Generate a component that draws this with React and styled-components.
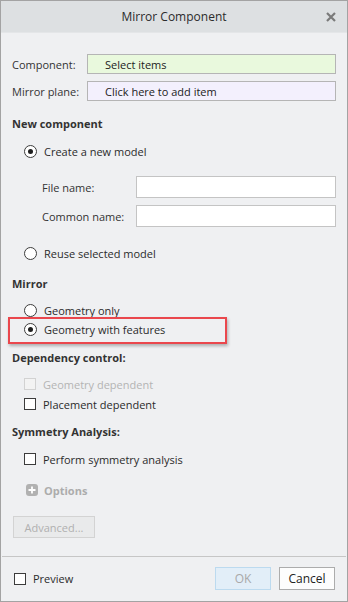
import React, { useState } from 'react'
import styled, { createGlobalStyle } from 'styled-components'

const Global = createGlobalStyle`
  html, body { margin: 0; padding: 0; background: #ffffff; }
  body { font-family: "Open Sans", "Noto Sans", sans-serif; }
`

const Dialog = () => {
  const [model, setmodel] = useState('new')
  const [mirror, setmirror] = useState('features')
  const [placement, setplacement] = useState(false)
  const [symmetry, setsymmetry] = useState(false)
  const [preview, setpreview] = useState(false)

  return (
    <Window>
      <Global />
      <TitleBar>
        <Title>Mirror Component</Title>
        <Close>
          <svg width="10" height="10" viewBox="0 0 10 10">
            <path d="M1 1 L9 9 M9 1 L1 9" stroke="#7a7a7a" strokeWidth="2.2" />
          </svg>
        </Close>
      </TitleBar>

      <Body>
        <FieldRow $top={21}>
          <Label $width={75}>Component:</Label>
          <Collector $bg="#e9f9dd">Select items</Collector>
        </FieldRow>
        <FieldRow $top={7}>
          <Label $width={75}>Mirror plane:</Label>
          <Collector $bg="#f3f0fd">Click here to add item</Collector>
        </FieldRow>

        <Section $top={14}>New component</Section>
        <Option $top={11} onClick={() => setmodel('new')}>
          <Radio $on={model === 'new'} />
          Create a new model
        </Option>
        <InputRow $top={16}>
          <Label $width={94}>File name:</Label>
          <TextBox />
        </InputRow>
        <InputRow $top={7}>
          <Label $width={94}>Common name:</Label>
          <TextBox />
        </InputRow>
        <Option $top={17} onClick={() => setmodel('reuse')}>
          <Radio $on={model === 'reuse'} />
          Reuse selected model
        </Option>

        <Section $top={13}>Mirror</Section>
        <Option $top={10} onClick={() => setmirror('geometry')}>
          <Radio $on={mirror === 'geometry'} />
          Geometry only
        </Option>
        <Option $top={1} $marked onClick={() => setmirror('features')}>
          <Radio $on={mirror === 'features'} />
          Geometry with features
        </Option>

        <Section $top={11}>Dependency control:</Section>
        <Option $top={10} $disabled>
          <Check $disabled />
          Geometry dependent
        </Option>
        <Option $top={2} onClick={() => setplacement(!placement)}>
          <Check $on={placement} />
          Placement dependent
        </Option>

        <Section $top={10}>Symmetry Analysis:</Section>
        <Option $top={11} onClick={() => setsymmetry(!symmetry)}>
          <Check $on={symmetry} />
          Perform symmetry analysis
        </Option>

        <Expander $top={13}>
          <PlusBox>
            <svg width="8" height="8" viewBox="0 0 8 8">
              <path d="M4 0.5 V7.5 M0.5 4 H7.5" stroke="#ffffff" strokeWidth="1.8" />
            </svg>
          </PlusBox>
          Options
        </Expander>

        <Advanced disabled>Advanced...</Advanced>
      </Body>

      <Footer>
        <PreviewToggle onClick={() => setpreview(!preview)}>
          <Check $on={preview} />
          Preview
        </PreviewToggle>
        <Buttons>
          <Button $ok disabled>OK</Button>
          <Button>Cancel</Button>
        </Buttons>
      </Footer>
    </Window>
  )
}

const Window = styled.div`
  width: 348px;
  height: 602px;
  box-sizing: border-box;
  border: 1px solid #a3a3a3;
  background-color: #eff0f2;
  display: flex;
  flex-direction: column;
  font-size: 11px;
  color: #2b2b2b;
  overflow: hidden;
`

const TitleBar = styled.div`
  height: 32px;
  flex-shrink: 0;
  background-color: #dde0e2;
  display: flex;
  align-items: center;
  justify-content: center;
  position: relative;
  border-bottom: 1px solid #e4e6e8;
  box-sizing: border-box;
`

const Title = styled.div`
  font-size: 12px;
  color: #2b2b2b;
`

const Close = styled.div`
  position: absolute;
  right: 11px;
  top: 11px;
  width: 10px;
  height: 10px;
  display: flex;
`

const Body = styled.div`
  flex: 1;
  display: flex;
  flex-direction: column;
  padding: 0 11px 0 11px;
`

const FieldRow = styled.div`
  display: flex;
  align-items: center;
  height: 20px;
  margin-top: ${({ $top }) => $top}px;
`

const InputRow = styled(FieldRow)`
  height: 22px;
  padding-left: 30px;
`

const Label = styled.div`
  width: ${({ $width }) => $width}px;
  flex-shrink: 0;
  white-space: nowrap;
  color: #333333;
`

const Collector = styled.div`
  flex: 1;
  height: 20px;
  box-sizing: border-box;
  border: 1px solid #b5b5b5;
  background-color: ${({ $bg }) => $bg};
  padding-left: 17px;
  display: flex;
  align-items: center;
  color: #222222;
`

const TextBox = styled.input`
  flex: 1;
  height: 22px;
  box-sizing: border-box;
  border: 1px solid #c4c4c4;
  background-color: #ffffff;
  outline: none;
  padding: 0 4px;
  margin: 0;
`

const Section = styled.div`
  height: 16px;
  display: flex;
  align-items: center;
  font-weight: 700;
  color: #333333;
  margin-top: ${({ $top }) => $top}px;
`

const Option = styled.div`
  height: 18px;
  display: flex;
  align-items: center;
  gap: 7px;
  padding-left: 12px;
  position: relative;
  margin-top: ${({ $top }) => $top}px;
  color: ${({ $disabled }) => ($disabled ? '#b4b4b4' : '#2b2b2b')};
  cursor: default;

  ${({ $marked }) =>
    $marked &&
    `
    &::after {
      content: "";
      position: absolute;
      box-sizing: border-box;
      left: -4px;
      top: -3px;
      width: 219px;
      height: 27px;
      border: 2px solid #ea474d;
      box-shadow: 1px 2px 3px rgba(0, 0, 0, 0.28);
      pointer-events: none;
    }
  `}
`

const Radio = styled.span`
  width: 13px;
  height: 13px;
  box-sizing: border-box;
  border-radius: 50%;
  border: 1px solid #3c3c3c;
  background-color: #ffffff;
  display: flex;
  align-items: center;
  justify-content: center;
  flex-shrink: 0;

  &::after {
    content: "";
    width: 5px;
    height: 5px;
    border-radius: 50%;
    background-color: #1e1e1e;
    display: ${({ $on }) => ($on ? 'block' : 'none')};
  }
`

const Check = styled.span`
  width: 12px;
  height: 12px;
  box-sizing: border-box;
  border: 1px solid ${({ $disabled }) => ($disabled ? '#d2d2d2' : '#3c3c3c')};
  background-color: ${({ $disabled }) => ($disabled ? '#f3f3f3' : '#ffffff')};
  flex-shrink: 0;
  position: relative;

  &::after {
    content: "";
    position: absolute;
    left: 3px;
    top: 0px;
    width: 3px;
    height: 7px;
    border: solid #1e1e1e;
    border-width: 0 2px 2px 0;
    transform: rotate(45deg);
    display: ${({ $on }) => ($on ? 'block' : 'none')};
  }
`

const Expander = styled.div`
  height: 18px;
  display: flex;
  align-items: center;
  gap: 6px;
  padding-left: 14px;
  margin-top: ${({ $top }) => $top}px;
  font-weight: 700;
  color: #acacac;
`

const PlusBox = styled.span`
  width: 12px;
  height: 12px;
  border-radius: 3px;
  background-color: #b1b1b1;
  display: flex;
  align-items: center;
  justify-content: center;
`

const Advanced = styled.button`
  align-self: flex-start;
  margin-top: 17px;
  width: 82px;
  height: 22px;
  box-sizing: border-box;
  border: 1px solid #d3d3d3;
  background-color: #e9eaeb;
  color: #b0b0b0;
  font-family: inherit;
  font-size: 11px;
  padding: 0;
  margin-left: 1px;
`

const Footer = styled.div`
  height: 45px;
  flex-shrink: 0;
  margin: 0 1px 0 1px;
  border-top: 1px solid #c6c6c6;
  display: flex;
  align-items: center;
  justify-content: space-between;
  padding: 0 11px 1px 12px;
  box-sizing: border-box;
`

const PreviewToggle = styled.div`
  display: flex;
  align-items: center;
  gap: 7px;
  color: #2b2b2b;
`

const Buttons = styled.div`
  display: flex;
  gap: 8px;
`

const Button = styled.button`
  width: 56px;
  height: 23px;
  box-sizing: border-box;
  border: 1px solid ${({ $ok }) => ($ok ? '#bcdaef' : '#acacac')};
  background-color: ${({ $ok }) => ($ok ? '#e2eef8' : '#fdfdfd')};
  color: ${({ $ok }) => ($ok ? '#a9a9a9' : '#222222')};
  font-family: inherit;
  font-size: 12px;
  padding: 0;
`

export default Dialog
